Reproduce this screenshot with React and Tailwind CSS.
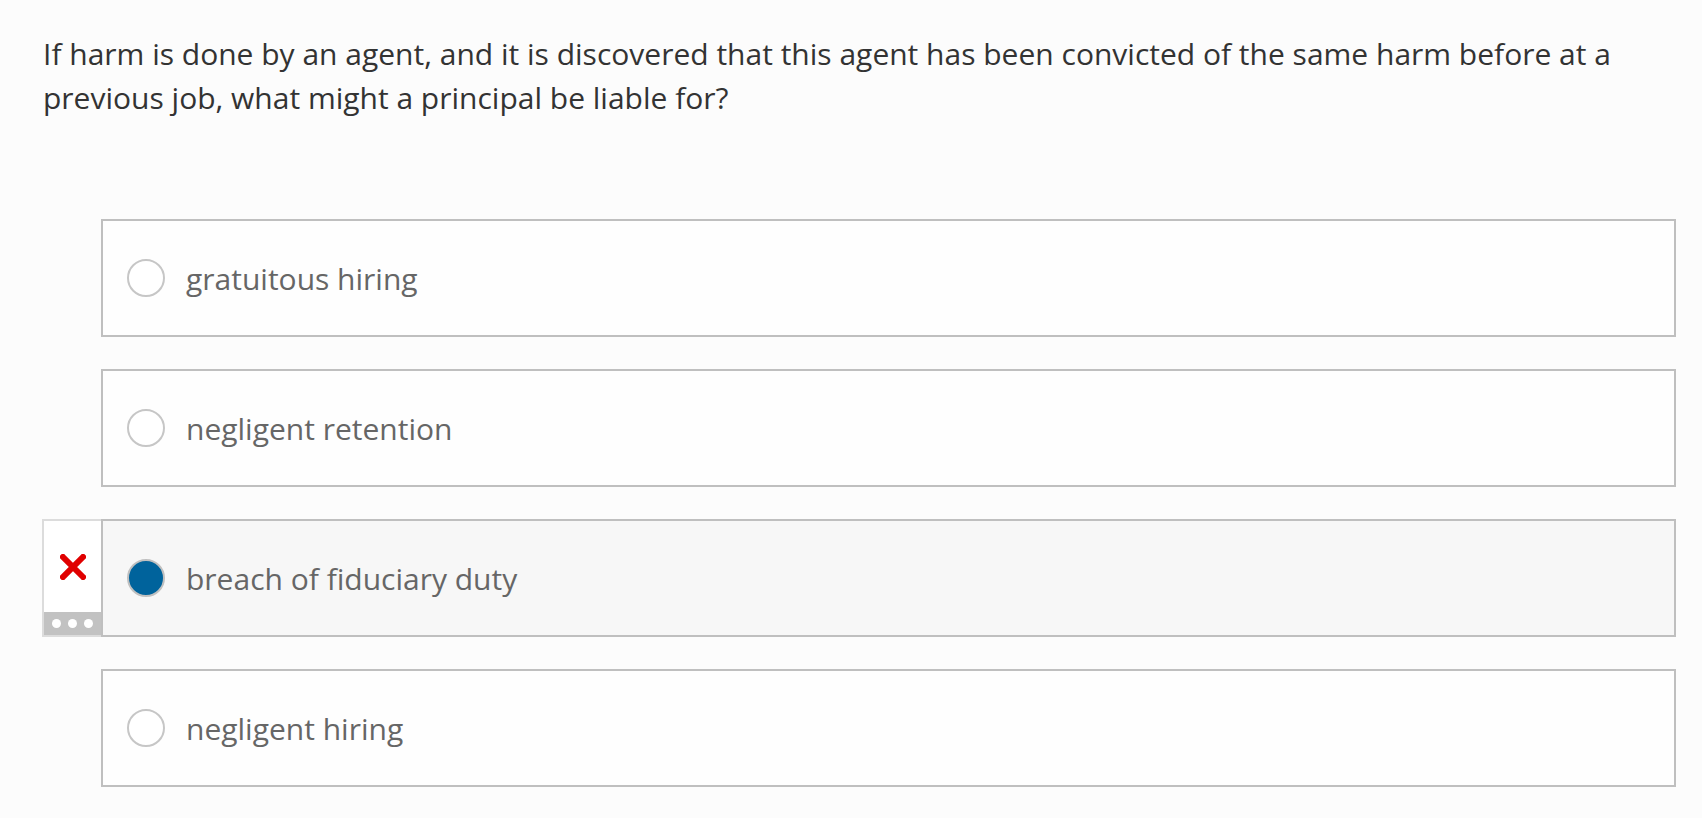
import React from 'react';

const options = [
  { label: 'gratuitous hiring', selected: false },
  { label: 'negligent retention', selected: false },
  { label: 'breach of fiduciary duty', selected: true, wrong: true },
  { label: 'negligent hiring', selected: false },
];

function Feedback({ wrong }) {
  if (!wrong) return <div className="w-[59px] shrink-0" />;
  return (
    <div className="w-[59px] shrink-0 flex flex-col border-2 border-r-0 border-[#dcdcdc] bg-white">
      <div className="flex-1 flex items-center justify-center">
        <svg width="26" height="26" viewBox="0 0 26 26">
          <path d="M3 3 L23 23 M23 3 L3 23" stroke="#e00000" strokeWidth="6" strokeLinecap="square" />
        </svg>
      </div>
      <div className="h-[23px] bg-[#c2c2c2] flex items-center justify-center gap-[7px]">
        <span className="w-[9px] h-[9px] rounded-full bg-white" />
        <span className="w-[9px] h-[9px] rounded-full bg-white" />
        <span className="w-[9px] h-[9px] rounded-full bg-white" />
      </div>
    </div>
  );
}

function Option({ label, selected, wrong }) {
  return (
    <div className="flex h-[118px]">
      <Feedback wrong={wrong} />
      <div
        className={
          'flex-1 flex items-center border-2 border-[#bfbfbf] pl-6 ' +
          (selected ? 'bg-[#f7f7f7]' : 'bg-[#fefefe]')
        }
      >
        <span
          className={
            'w-[38px] h-[38px] rounded-full border-2 shrink-0 ' +
            (selected ? 'bg-[#00639c] border-[#c0c0c0]' : 'bg-white border-[#c6c6c6]')
          }
        />
        <span className="ml-[21px] text-[30px] text-[#666666]">{label}</span>
      </div>
    </div>
  );
}

export default function App() {
  return (
    <div
      className="min-h-screen bg-[#fcfcfc] pl-[42px] pr-[26px] pt-[32px]"
      style={{ fontFamily: '"Open Sans", sans-serif' }}
    >
      <p className="pl-[1px] text-[30px] leading-[44px] text-[#333333]">
        If harm is done by an agent, and it is discovered that this agent has been convicted of the same harm before at a
        previous job, what might a principal be liable for?
      </p>
      <div className="mt-[99px] flex flex-col gap-[32px]">
        {options.map((o) => (
          <Option key={o.label} {...o} />
        ))}
      </div>
    </div>
  );
}
